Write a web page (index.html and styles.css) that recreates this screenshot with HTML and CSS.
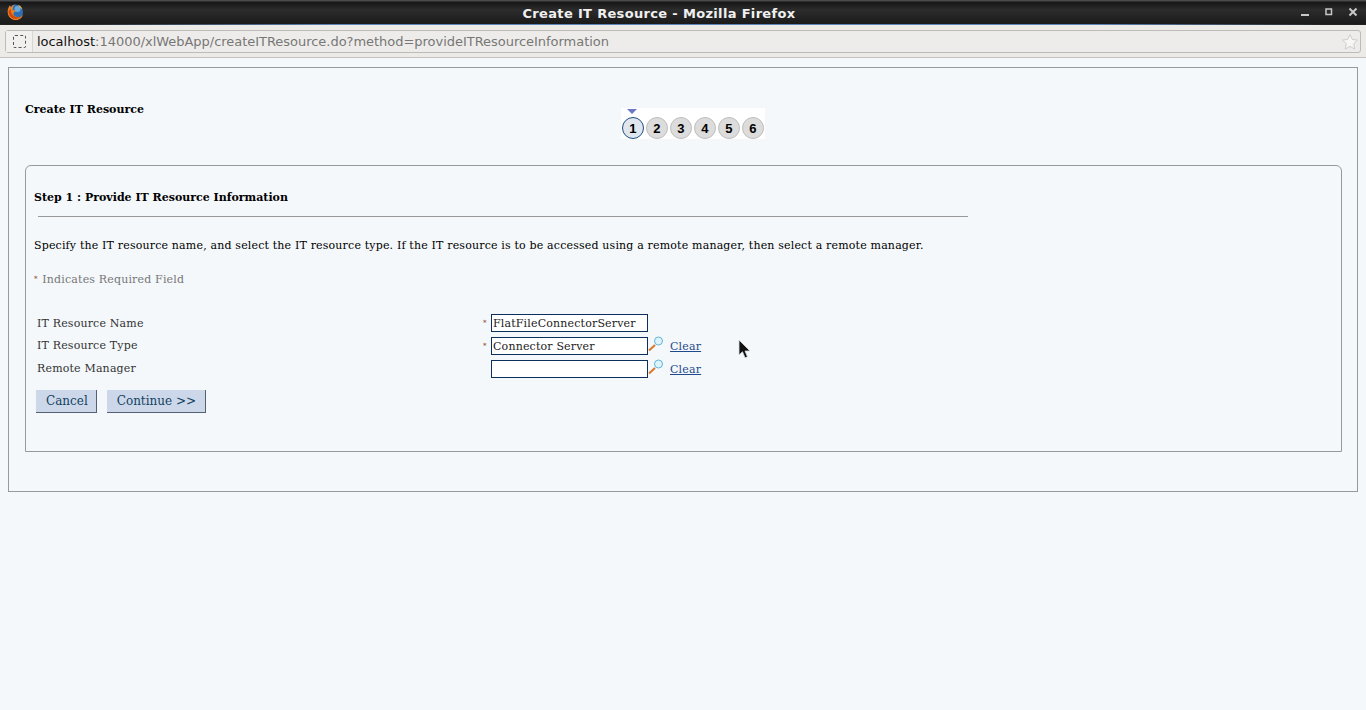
FILE: index.html
```html
<!DOCTYPE html>
<html lang="en">
<head>
<meta charset="utf-8">
<title>Create IT Resource - Mozilla Firefox</title>
<link rel="stylesheet" href="styles.css">
</head>
<body>
<header class="titlebar">
  <svg class="fx-logo" width="18" height="18" viewBox="0 0 18 18">
    <circle cx="9.500" cy="9" r="7.500" fill="#2f6fb5"/>
    <circle cx="11.500" cy="6" r="3" fill="#6aa9de"/>
    <path d="M4 2C2 5 1 8 2 11c1 4 4.500 6 8 6 4 0 6.500-2.500 7-6-1 2.500-3 3.500-5 3.300-3-.3-5-2.300-4.500-4.300.3-1 1.500-1.300 2.500-1.800-.8-1-2.300-1-3.300-.6C6.500 5.500 6.800 3.500 8.800 1.800 7 2 5.800 3.300 5.200 4.500 4.500 4 4.200 3 4 2z" fill="#ee8420"/>
    <path d="M2.500 8c0 4.500 3 8 7.500 8 2 0 4-1 5-2-3 1-7 0-9-3-.8-1.200-1.300-3-1-5-1 .5-2 1-2.500 2z" fill="#d24a10"/>
    <path d="M12 1.800c2.200.8 3.800 2.500 4.500 4.700L14 4.500z" fill="#f7b733"/>
  </svg>
  <h1 class="window-title">Create IT Resource - Mozilla Firefox</h1>
  <div class="window-controls">
    <svg width="10" height="10" viewBox="0 0 10 10"><rect x="1" y="7" width="8" height="2" fill="#c8c8c8"/></svg>
    <svg width="10" height="10" viewBox="0 0 10 10"><rect x="2" y="2" width="5.500" height="5.500" fill="none" stroke="#c8c8c8" stroke-width="1.500"/></svg>
    <svg width="10" height="10" viewBox="0 0 10 10"><path d="M1.500 1.500l7 7M8.500 1.500l-7 7" stroke="#c8c8c8" stroke-width="2"/></svg>
  </div>
</header>
<div class="toolbar">
  <div class="urlbar">
    <span class="identity"><span class="identity-box"></span></span>
    <span class="url"><span class="url-host">localhost</span>:14000/xlWebApp/createITResource.do?method=provideITResourceInformation</span>
    <svg class="star" width="18" height="18" viewBox="0 0 18 18"><path d="M9 1.500l2.300 4.900 5.200.7-3.800 3.600 1 5.300L9 13.400l-4.700 2.600 1-5.300L1.500 7.100l5.200-.7z" fill="#f7f6f4" stroke="#cfcdc9"/></svg>
  </div>
</div>
<main class="page">
  <div class="outer-box">
    <div class="head-row">
      <h2 class="page-title">Create IT Resource</h2>
      <div class="steps">
        <div class="step-marker"></div>
        <div class="step-row">
          <span class="step step-current">1</span>
          <span class="step">2</span>
          <span class="step">3</span>
          <span class="step">4</span>
          <span class="step">5</span>
          <span class="step">6</span>
        </div>
      </div>
    </div>
    <section class="inner-box">
      <h3 class="step-title">Step 1 : Provide IT Resource Information</h3>
      <hr class="rule">
      <p class="intro">Specify the IT resource name, and select the IT resource type. If the IT resource is to be accessed using a remote manager, then select a remote manager.</p>
      <p class="required-note"><span class="req req-note">*</span> Indicates Required Field</p>
      <div class="form">
        <div class="form-row">
          <span class="label">IT Resource Name</span>
          <span class="req-slot"><span class="req">*</span></span>
          <input class="field" type="text" value="FlatFileConnectorServer">
        </div>
        <div class="form-row">
          <span class="label">IT Resource Type</span>
          <span class="req-slot"><span class="req">*</span></span>
          <input class="field" type="text" value="Connector Server">
          <svg class="lookup" width="16" height="16" viewBox="0 0 16 16"><path d="M1 14.500L7 9" stroke="#d9772b" stroke-width="2"/><circle cx="10.500" cy="5" r="4" fill="#dff3fb" stroke="#62b6d6"/></svg>
          <a class="clear" href="#">Clear</a>
        </div>
        <div class="form-row">
          <span class="label">Remote Manager</span>
          <span class="req-slot"></span>
          <input class="field" type="text" value="">
          <svg class="lookup" width="16" height="16" viewBox="0 0 16 16"><path d="M1 14.500L7 9" stroke="#d9772b" stroke-width="2"/><circle cx="10.500" cy="5" r="4" fill="#dff3fb" stroke="#62b6d6"/></svg>
          <a class="clear" href="#">Clear</a>
        </div>
      </div>
      <div class="buttons">
        <button class="btn" type="button">Cancel</button>
        <button class="btn btn-wide" type="button">Continue &gt;&gt;</button>
      </div>
    </section>
  </div>
  <svg class="cursor" width="14" height="20" viewBox="0 0 14 20"><path d="M1 1v15l3.500-3.200 2.500 6 2.500-1-2.500-5.800h5z" fill="#111" stroke="#ddd" stroke-width=".8"/></svg>
</main>
</body>
</html>
```
FILE: styles.css
```css
* { box-sizing: border-box; }
html, body { margin: 0; height: 100%; }
body {
  display: flex;
  flex-direction: column;
  height: 710px;
  overflow: hidden;
  background: #f4f8fb;
  font-family: "DejaVu Serif", serif;
  font-size: 11px;
  letter-spacing: 0.17px;
  color: #000;
}
.titlebar {
  height: 25px;
  flex: none;
  display: flex;
  align-items: center;
  position: relative;
  padding-left: 6px;
  background: linear-gradient(#4a4a4a 0, #4a4a4a 1px, #161616 2px, #2c2c2c 10px, #1a1a1a 100%);
  border-bottom: 1px solid;
  border-image: linear-gradient(to right, #222 5%, #5f86b8 25%, #5f86b8 80%, #222 97%) 1;
}
.fx-logo { flex: none; }
.window-title {
  position: absolute;
  left: 0;
  right: 48px;
  top: 6px;
  margin: 0;
  text-align: center;
  font: bold 13px/16px "DejaVu Sans", sans-serif;
  letter-spacing: 0.33px;
  color: #f0f0f0;
}
.window-controls {
  margin-left: auto;
  display: flex;
  gap: 14px;
  padding-right: 8px;
}
.toolbar {
  height: 33px;
  flex: none;
  padding: 5px 5px 0;
  background: #edebe8;
  border-bottom: 1px solid #c4c2be;
}
.urlbar {
  height: 23px;
  display: flex;
  align-items: center;
  background: #eeecea;
  border: 1px solid #bdbbb7;
  border-radius: 3px;
}
.identity {
  width: 27px;
  height: 21px;
  flex: none;
  display: flex;
  align-items: center;
  justify-content: center;
  background: #f2f0ee;
  border-right: 1px solid #d8d6d2;
}
.identity-box {
  width: 13px;
  height: 13px;
  border: 1px dashed #555;
  border-radius: 2px;
}
.url {
  flex: 1;
  padding-left: 4px;
  font: 13px/18px "DejaVu Sans", sans-serif;
  letter-spacing: -0.03px;
  color: #777;
  white-space: nowrap;
}
.url-host { color: #111; }
.star { flex: none; margin-right: 1px; }
.page {
  flex: 1;
  position: relative;
  padding: 9px 8px 0;
}
.outer-box {
  height: 425px;
  padding: 0 15px 0 16px;
  border: 1px solid #999;
}
.head-row {
  height: 97px;
  display: flex;
  position: relative;
}
.page-title {
  margin: 35px 0 0;
  font-size: 11px;
  line-height: 14px;
  font-weight: bold;
  letter-spacing: 0;
}
.steps {
  position: absolute;
  left: 596px;
  top: 40px;
  width: 144px;
  height: 31px;
  padding-top: 1px;
  background: #fff;
}
.step-marker {
  width: 0;
  height: 0;
  margin-left: 6px;
  border: 5px solid transparent;
  border-top: 5px solid #6b78c8;
  border-bottom: 0;
}
.step-row {
  display: flex;
  gap: 2px;
  margin-top: 3px;
  padding-left: 1px;
}
.step {
  width: 22px;
  height: 22px;
  display: flex;
  align-items: center;
  justify-content: center;
  border-radius: 50%;
  background: #dcdcdc;
  border: 1px solid #bdbdbd;
  font: bold 13px "Liberation Sans", sans-serif;
}
.step-current {
  background: #dfe6ee;
  border: 1.500px solid #1f4f82;
}
.inner-box {
  height: 287px;
  padding: 0 8px;
  border: 1px solid #999;
  border-top-left-radius: 6px;
  border-top-right-radius: 6px;
}
.step-title {
  margin: 25px 0 0;
  font-size: 11px;
  line-height: 14px;
  font-weight: bold;
  letter-spacing: 0;
}
.rule {
  width: 930px;
  height: 1px;
  margin: 11px 0 0 4px;
  border: 0;
  background: #999;
}
.intro {
  margin: 22px 0 0;
  line-height: 14px;
}
.required-note {
  margin: 19px 0 0;
  line-height: 14px;
  color: #777;
}
.req { color: #8a4a1f; font-size: 7px; vertical-align: 2px; }
.req-note { margin-right: 1px; }
.form { margin-top: 25px; padding-left: 3px; }
.form-row {
  height: 23px;
  display: flex;
  align-items: center;
}
.label {
  width: 446px;
  color: #333;
  position: relative;
  top: -1px;
}
.form-row:first-child .label { top: 0; }
.req-slot { width: 8px; flex: none; }
.field {
  width: 157px;
  height: 18px;
  padding: 1px 1px 0;
  margin: -1px 0 0;
  border: 1px solid #0d2f5e;
  background: #fff;
  border-radius: 0;
  font: 11px "DejaVu Serif", serif;
  letter-spacing: 0.17px;
  color: #222;
}
.lookup { flex: none; margin-top: -5px; }
.clear {
  margin-left: 6px;
  color: #1e4a8c;
  text-decoration: underline;
}
.buttons {
  display: flex;
  gap: 10px;
  margin-top: 9px;
  padding-left: 2px;
}
.btn {
  height: 23px;
  padding: 0 8px 0 10px;
  background: #cdd7ea;
  border: 0;
  border-right: 1px solid #556070;
  border-bottom: 1px solid #556070;
  font: 12px "DejaVu Serif", serif;
  letter-spacing: 0;
  color: #12425f;
}
.btn-wide { padding-right: 9px; }
.cursor {
  position: absolute;
  left: 738px;
  top: 281px;
}
```
